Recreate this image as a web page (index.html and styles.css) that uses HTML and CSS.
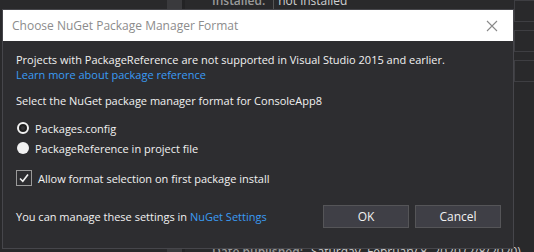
FILE: index.html
```html
<!DOCTYPE html>
<html lang="en">
<head>
  <meta charset="UTF-8"/>
  <title>Choose NuGet Package Manager Format</title>
  <link rel="stylesheet" href="styles.css">
</head>
<body>

<!-- Package details behind the dialog -->
<div class="backdrop">
  <div class="scroll-track"></div>
  <div class="details">
    <div class="detail top"><span class="key">Installed:</span><span class="val">not installed</span></div>
    <div class="detail bottom"><span class="key">Date published:</span><span class="val">Saturday, February 8, 2020 (2/8/2020)</span></div>
  </div>
  <div class="side-boxes">
    <span></span><span></span><span></span>
  </div>
</div>

<!-- Dialog -->
<div class="dialog">
  <div class="titlebar">
    <span class="title">Choose NuGet Package Manager Format</span>
    <svg class="close" width="12" height="12" viewBox="0 0 12 12"><path d="M1 1L11 11M11 1L1 11" stroke="#8a8a8a" stroke-width="1.1"/></svg>
  </div>
  <div class="content">
    <p>Projects with PackageReference are not supported in Visual Studio 2015 and earlier.</p>
    <a class="link" href="#">Learn more about package reference</a>

    <p class="select">Select the NuGet package manager format for ConsoleApp8</p>

    <div class="options">
      <label class="radio checked"><span class="dot"></span>Packages.config</label>
      <label class="radio"><span class="dot"></span>PackageReference in project file</label>
    </div>

    <label class="check">
      <span class="box"><svg width="12" height="12" viewBox="0 0 12 12"><path d="M2 6.5L4.8 9.3L10 2.5" fill="none" stroke="#f1f1f1" stroke-width="1.6"/></svg></span>
      Allow format selection on first package install
    </label>

    <div class="footer">
      <span>You can manage these settings in <a class="link" href="#">NuGet Settings</a></span>
      <div class="buttons">
        <button>OK</button>
        <button>Cancel</button>
      </div>
    </div>
  </div>
</div>

</body>
</html>
```

FILE: styles.css
```css
:root{
  --bg:#29292b;
  --panel:#2d2d30;
  --border:#46464b;
  --text:#f1f1f1;
  --muted:#8c8c8c;
  --link:#3a9cf5;
}
*{margin:0;padding:0;box-sizing:border-box}
body{
  width:534px;height:252px;overflow:hidden;position:relative;
  background:var(--bg);color:var(--text);
  font-family:"Open Sans","Noto Sans",Arial,sans-serif;font-size:11px;
}

/* backdrop */
.backdrop{display:flex;height:252px}
.scroll-track{width:18px;margin-left:167px;background:#3a3a3d;border-right:3px solid #232325}
.details{flex:1;display:flex;flex-direction:column;justify-content:space-between;padding-left:27px;min-width:0}
.detail{display:flex;gap:8px;font-size:12px;color:#d0d0d0;white-space:nowrap;line-height:16px}
.detail .key{color:#9a9a9a;font-weight:600}
.detail.top{margin-top:-7px}
.detail.top .val{border-left:1px solid #555;padding-left:4px}
.detail.bottom{margin-bottom:-8px}
.side-boxes{width:20px;display:flex;flex-direction:column;gap:8px}
.side-boxes span{display:block;height:22px;border:1px solid #3e3e42;border-right:none}

/* dialog */
.dialog{
  position:absolute;left:2px;top:9px;width:512px;height:240px;
  background:var(--panel);border:1px solid var(--border);
  display:flex;flex-direction:column;
}
.titlebar{
  background:#fff;height:31px;display:flex;align-items:center;justify-content:space-between;
  padding:0 15px 0 9px;
}
.title{color:var(--muted);font-size:12px}
.content{flex:1;padding:11px 12px 20px 13px;display:flex;flex-direction:column}
.link{color:var(--link);text-decoration:none}
.content p{line-height:15px}
.content > .link{line-height:15px;display:block}
.select{margin-top:11px}
.options{display:flex;flex-direction:column;gap:4px;margin-top:12px}
.radio{display:flex;align-items:center;gap:6px;height:16px}
.dot{width:12px;height:12px;border-radius:50%;background:#f1f1f1;margin-left:1px;position:relative}
.radio.checked .dot{background:#1e1e1e;border:2px solid #f1f1f1}
.radio.checked .dot::after{content:"";position:absolute;left:2px;top:2px;width:4px;height:4px;border-radius:50%;background:#333337}
.check{display:flex;align-items:center;gap:6px;margin-top:14px}
.box{width:16px;height:16px;border:1px solid #9a9a9a;display:flex;align-items:center;justify-content:center}
.footer{margin-top:auto;display:flex;align-items:center;justify-content:space-between}
.buttons{display:flex;gap:6px}
.buttons button{
  width:86px;height:23px;background:#3f3f46;border:1px solid #555558;color:var(--text);
  font-family:inherit;font-size:12px;
}
```
